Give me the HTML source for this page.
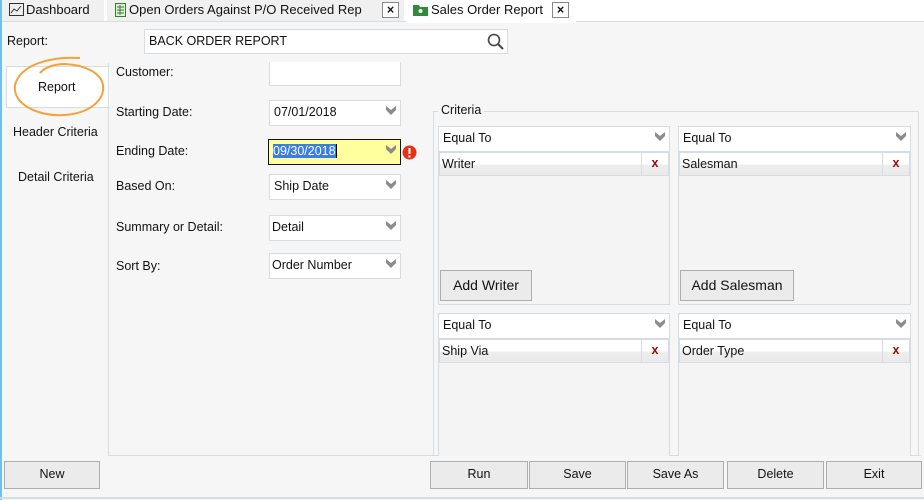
<!DOCTYPE html>
<html><head><style>
*{box-sizing:border-box;margin:0;padding:0}
body{width:924px;height:500px;background:#f6f6f6;font-family:"Liberation Sans",sans-serif;font-size:12.5px;color:#111;position:relative;overflow:hidden}
.a{position:absolute}
.inp{position:absolute;background:#fff;border:1px solid #d5dde3;padding-left:4px;line-height:22px;white-space:nowrap}
.chev{position:absolute;right:4px;top:5px;width:10px;height:9px}
.btn{position:absolute;background:#ebebeb;border:1px solid #adadad;text-align:center;line-height:25px}
.panel{position:absolute;border:1px solid #d5dde3;background:#f4f4f4}
.row{position:absolute;left:1px;right:1px;height:24px;background:linear-gradient(#fff 0,#fff 50%,#eeeeee 55%,#eaeaea);border:1px solid #d5dde3;line-height:22px;padding-left:2px}
.x{position:absolute;right:0;top:-1px;width:27px;height:24px;border-left:1px solid #d5dde3;color:#9b0a0a;font-weight:bold;text-align:center;line-height:22px}
</style></head><body>
<svg width="0" height="0" style="position:absolute"><defs><symbol id="cv" viewBox="0 0 10 9"><path d="M0 0L5 4L10 0V4L5 9L0 4Z" fill="#8c8c8c"/></symbol></defs></svg>
<div class="a" style="left:0;top:0;width:924px;height:22px;background:#fff;border-bottom:1px solid #d5dde3"></div>
<div class="a" style="left:0;top:0;width:2px;height:500px;background:#6fc1e6"></div>
<div class="a" style="left:2px;top:0;width:102px;height:21px;background:#f0f0f0"></div>
<svg class="a" style="left:9px;top:3px" width="15" height="13"><rect x="0.5" y="0.5" width="14" height="12" fill="#eee" stroke="#333"/><path d="M2 10L5 6L8 8L12 3" stroke="#333" fill="none"/></svg>
<div class="a" style="left:26px;top:2px;font-size:13px">Dashboard</div>
<div class="a" style="left:107px;top:0;width:297px;height:21px;background:#f0f0f0"></div>
<svg class="a" style="left:115px;top:3px" width="11" height="14"><rect x="0.5" y="0.5" width="10" height="13" fill="#dff0d8" stroke="#3a7d2c"/><path d="M2 4H9M2 7H9M2 10H9M5 2V12" stroke="#3a7d2c"/></svg>
<div class="a" style="left:129px;top:2px;font-size:13px">Open Orders Against P/O Received Rep</div>
<div class="a" style="left:382px;top:2px;width:17px;height:16px;border:1px solid #888;background:#fff;font-weight:bold;text-align:center;line-height:14px">×</div>
<div class="a" style="left:406px;top:0;width:170px;height:23px;background:#fff"></div>
<svg class="a" style="left:413px;top:3px" width="15" height="13"><path d="M0 2H6L7 4H15V13H0Z" fill="#2f8a3a"/><circle cx="7.5" cy="8" r="2" fill="#fff"/></svg>
<div class="a" style="left:431px;top:2px;font-size:13px">Sales Order Report</div>
<div class="a" style="left:552px;top:2px;width:17px;height:16px;border:1px solid #888;background:#fff;font-weight:bold;text-align:center;line-height:14px">×</div>

<div class="a" style="left:7px;top:34px">Report:</div>
<div class="inp" style="left:144px;top:29px;width:364px;height:25px">BACK ORDER REPORT</div>
<svg class="a" style="left:487px;top:33px" width="17" height="17"><circle cx="7" cy="7" r="5.5" fill="none" stroke="#444" stroke-width="1.6"/><path d="M11 11L16 16" stroke="#444" stroke-width="2"/></svg>

<div class="a" style="left:6px;top:66px;width:104px;height:42px;background:#fff;border:1px solid #d5dde3;border-right:none"></div>
<div class="a" style="left:38px;top:80px">Report</div>
<svg class="a" style="left:10px;top:55px" width="100" height="65"><path d="M70 3C40 1 10 10 5 30C2 50 30 62 55 60C80 58 95 45 93 30C91 18 75 10 55 9C45 9 35 12 30 18" fill="none" stroke="#f5a13a" stroke-width="2"/></svg>
<div class="a" style="left:13px;top:125px">Header Criteria</div>
<div class="a" style="left:18px;top:170px">Detail Criteria</div>

<div class="a" style="left:108px;top:63px;width:813px;height:393px;border-left:1px solid #d5dde3;border-bottom:1px solid #d5dde3"></div>
<div class="a" style="left:116px;top:65px">Customer:</div>
<div class="inp" style="left:269px;top:62px;width:132px;height:24px;border-top:none"></div>
<div class="a" style="left:116px;top:105px">Starting Date:</div>
<div class="inp" style="left:269px;top:100px;width:132px;height:26px">07/01/2018<svg class="chev"><use href="#cv"/></svg></div>
<div class="a" style="left:116px;top:144px">Ending Date:</div>
<div class="inp" style="left:268px;top:139px;width:133px;height:26px;background:#ffff9e;border-color:#111;padding-left:4px"><span style="background:#3b7de0;color:#fff">09/30/2018</span><span style="border-left:1px solid #000"></span><svg class="chev"><use href="#cv"/></svg></div>
<svg class="a" style="left:402px;top:145px" width="15" height="15"><circle cx="7.5" cy="7.5" r="7" fill="#e2331a"/><rect x="6.5" y="3" width="2" height="6" fill="#fff"/><rect x="6.5" y="10.5" width="2" height="2" fill="#fff"/></svg>
<div class="a" style="left:116px;top:179px">Based On:</div>
<div class="inp" style="left:269px;top:174px;width:132px;height:26px">Ship Date<svg class="chev"><use href="#cv"/></svg></div>
<div class="a" style="left:116px;top:220px">Summary or Detail:</div>
<div class="inp" style="left:269px;top:215px;width:132px;height:26px;padding-left:2px">Detail<svg class="chev"><use href="#cv"/></svg></div>
<div class="a" style="left:116px;top:259px">Sort By:</div>
<div class="inp" style="left:269px;top:253px;width:132px;height:26px;padding-left:2px">Order Number<svg class="chev"><use href="#cv"/></svg></div>

<div class="a" style="left:433px;top:111px;width:486px;height:345px;border:1px solid #d5dde3;border-bottom:none"></div>
<div class="a" style="left:438px;top:103px;background:#f6f6f6;padding:0 3px">Criteria</div>

<div class="panel" style="left:438px;top:126px;width:232px;height:179px"></div>
<div class="inp" style="left:438px;top:126px;width:232px;height:26px">Equal To<svg class="chev"><use href="#cv"/></svg></div>
<div class="row" style="left:439px;top:152px;width:230px">Writer<div class="x">x</div></div>
<div class="btn" style="left:440px;top:270px;width:92px;height:31px;line-height:29px;font-size:14px">Add Writer</div>

<div class="panel" style="left:678px;top:126px;width:233px;height:179px"></div>
<div class="inp" style="left:678px;top:126px;width:233px;height:26px">Equal To<svg class="chev"><use href="#cv"/></svg></div>
<div class="row" style="left:679px;top:152px;width:231px">Salesman<div class="x">x</div></div>
<div class="btn" style="left:680px;top:270px;width:114px;height:31px;line-height:29px;font-size:14px">Add Salesman</div>

<div class="panel" style="left:438px;top:313px;width:232px;height:143px;border-bottom:none"></div>
<div class="inp" style="left:438px;top:313px;width:232px;height:26px">Equal To<svg class="chev"><use href="#cv"/></svg></div>
<div class="row" style="left:439px;top:339px;width:230px">Ship Via<div class="x">x</div></div>

<div class="panel" style="left:678px;top:313px;width:233px;height:143px;border-bottom:none"></div>
<div class="inp" style="left:678px;top:313px;width:233px;height:26px">Equal To<svg class="chev"><use href="#cv"/></svg></div>
<div class="row" style="left:679px;top:339px;width:231px">Order Type<div class="x">x</div></div>

<div class="btn" style="left:4px;top:461px;width:96px;height:28px">New</div>
<div class="btn" style="left:430px;top:461px;width:98px;height:28px">Run</div>
<div class="btn" style="left:529px;top:461px;width:97px;height:28px">Save</div>
<div class="btn" style="left:627px;top:461px;width:97px;height:28px">Save As</div>
<div class="btn" style="left:727px;top:461px;width:97px;height:28px">Delete</div>
<div class="btn" style="left:826px;top:461px;width:96px;height:28px">Exit</div>
<div class="a" style="left:0;top:497px;width:924px;height:2px;background:#d5dde3"></div>
</body></html>
